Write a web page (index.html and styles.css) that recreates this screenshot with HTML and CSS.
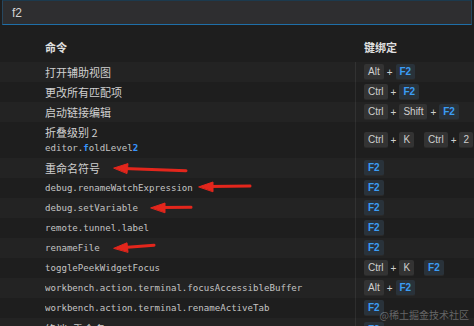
FILE: index.html
```html
<!DOCTYPE html>
<html lang="zh">
<head>
<meta charset="utf-8">
<link rel="stylesheet" href="styles.css">
</head>
<body>
<div class="page">
  <div class="search"><span class="query">f2</span></div>
  <div class="table">
    <div class="row header">
      <div class="cmd"><span class="title">命令</span></div>
      <div class="keys"><span class="title">键绑定</span></div>
    </div>
    <div class="row odd">
      <div class="cmd"><span class="zh">打开辅助视图</span></div>
      <div class="keys"><span class="kc">Alt</span><span class="plus">+</span><span class="kc hl">F2</span></div>
    </div>
    <div class="row">
      <div class="cmd"><span class="zh">更改所有匹配项</span></div>
      <div class="keys"><span class="kc">Ctrl</span><span class="plus">+</span><span class="kc hl">F2</span></div>
    </div>
    <div class="row odd">
      <div class="cmd"><span class="zh">启动链接编辑</span></div>
      <div class="keys"><span class="kc">Ctrl</span><span class="plus">+</span><span class="kc">Shift</span><span class="plus">+</span><span class="kc hl">F2</span></div>
    </div>
    <div class="row tall">
      <div class="cmd two"><span class="zh">折叠级别 2</span><span class="id">editor.<b>f</b>oldLevel<b>2</b></span></div>
      <div class="keys"><span class="kc">Ctrl</span><span class="plus">+</span><span class="kc">K</span><span class="chord"></span><span class="kc">Ctrl</span><span class="plus">+</span><span class="kc">2</span></div>
    </div>
    <div class="row odd">
      <div class="cmd"><span class="zh">重命名符号</span></div>
      <div class="keys"><span class="kc hl">F2</span></div>
    </div>
    <div class="row">
      <div class="cmd"><span class="id">debug.renameWatchExpression</span></div>
      <div class="keys"><span class="kc hl">F2</span></div>
    </div>
    <div class="row odd">
      <div class="cmd"><span class="id">debug.setVariable</span></div>
      <div class="keys"><span class="kc hl">F2</span></div>
    </div>
    <div class="row">
      <div class="cmd"><span class="id">remote.tunnel.label</span></div>
      <div class="keys"><span class="kc hl">F2</span></div>
    </div>
    <div class="row odd">
      <div class="cmd"><span class="id">renameFile</span></div>
      <div class="keys"><span class="kc hl">F2</span></div>
    </div>
    <div class="row">
      <div class="cmd"><span class="id">togglePeekWidgetFocus</span></div>
      <div class="keys"><span class="kc">Ctrl</span><span class="plus">+</span><span class="kc">K</span><span class="chord"></span><span class="kc hl">F2</span></div>
    </div>
    <div class="row odd">
      <div class="cmd"><span class="id">workbench.action.terminal.focusAccessibleBuffer</span></div>
      <div class="keys"><span class="kc">Alt</span><span class="plus">+</span><span class="kc hl">F2</span></div>
    </div>
    <div class="row">
      <div class="cmd"><span class="id">workbench.action.terminal.renameActiveTab</span></div>
      <div class="keys"><span class="kc hl">F2</span></div>
    </div>
    <div class="row odd last">
      <div class="cmd"><span class="zh">终端: 重命名</span></div>
      <div class="keys"><span class="kc hl">F2</span></div>
    </div>
  </div>

  <svg class="arrows" width="474" height="326" viewBox="0 0 474 326">
    <g fill="#e3261c" stroke="#e3261c" stroke-linecap="round" stroke-linejoin="round">
      <line x1="124" y1="168.6" x2="186" y2="170.8" stroke-width="3"/>
      <polygon points="114,168 128,163.6 127,173.2" stroke-width="1"/>
      <line x1="209" y1="186.6" x2="250" y2="186" stroke-width="3"/>
      <polygon points="199,186.8 213,182 213,191.4" stroke-width="1"/>
      <line x1="161" y1="207.6" x2="191" y2="207.2" stroke-width="3"/>
      <polygon points="151,207.8 165,203 165,212.4" stroke-width="1"/>
      <line x1="124" y1="247.4" x2="154" y2="245.2" stroke-width="3"/>
      <polygon points="114,248.2 127,242.8 128,252" stroke-width="1"/>
    </g>
  </svg>
  <div class="watermark">@稀土掘金技术社区</div>
</div>
</body>
</html>
```

FILE: styles.css
```css
html, body {
  margin: 0;
  padding: 0;
  background: #1e1e1e;
}
.page {
  position: relative;
  width: 474px;
  height: 326px;
  overflow: hidden;
  background: #1e1e1e;
  font-family: "Liberation Sans", "Noto Sans CJK SC", sans-serif;
}
.search {
  box-sizing: border-box;
  height: 25px;
  margin: 0 2px;
  background: #2e2e30;
  border: 1px solid #27475f;
  border-top-color: #1c3a4e;
  border-bottom: 1px solid #1f6fa8;
  display: flex;
  align-items: center;
  padding-left: 9px;
}
.query {
  color: #d4d4d4;
  font-size: 12px;
}
.table {
  margin-top: 11px;
}
.row {
  display: grid;
  grid-template-columns: 45px 310px 1fr;
  height: 20px;
}
.row.odd {
  background: rgba(255, 255, 255, 0.025);
}
.row.tall {
  height: 36px;
}
.row.header {
  height: 26px;
}
.row.last .cmd, .row.last .keys {
  align-items: flex-start;
  padding-top: 4px;
}
.cmd {
  grid-column: 2;
  display: flex;
  align-items: center;
  white-space: nowrap;
  overflow: hidden;
}
.cmd.two {
  flex-direction: column;
  align-items: flex-start;
  justify-content: center;
  gap: 1px;
}
.keys {
  grid-column: 3;
  display: flex;
  align-items: center;
  padding-left: 8px;
  border-left: 1px solid rgba(255, 255, 255, 0.07);
  white-space: nowrap;
}
.header .cmd, .header .keys {
  align-items: flex-start;
  padding-top: 3px;
  border-left: none;
}
.header .keys {
  padding-left: 9px;
}
.title {
  font-family: "Noto Sans CJK SC", sans-serif;
  font-weight: 700;
  font-size: 11px;
  color: #e0e0e0;
  line-height: 16px;
}
.zh {
  font-family: "Noto Sans CJK SC", sans-serif;
  font-size: 11px;
  color: #d0d0d0;
  line-height: 15px;
}
.id {
  font-family: "DejaVu Sans Mono", "Liberation Mono", monospace;
  font-size: 9.1px;
  color: #c4c4c4;
  line-height: 14px;
}
.id b {
  font-weight: 700;
  color: #3794ff;
}
.kc {
  display: inline-flex;
  align-items: center;
  height: 15px;
  padding: 0 4px;
  border-radius: 2px;
  background: #333333;
  border-bottom: 1px solid #2a2a2a;
  color: #cfcfcf;
  font-family: "Liberation Sans", sans-serif;
  font-size: 10px;
}
.kc.hl {
  background: #29323a;
  color: #3b9df5;
  font-weight: 700;
}
.plus {
  color: #cfcfcf;
  font-size: 10px;
  margin: 0 3px;
}
.chord {
  width: 10px;
}
.arrows {
  position: absolute;
  left: 0;
  top: 0;
}
.watermark {
  position: absolute;
  right: 5px;
  bottom: 4px;
  font-family: "Noto Sans CJK SC", sans-serif;
  font-size: 10px;
  color: rgba(255, 255, 255, 0.32);
}
```
